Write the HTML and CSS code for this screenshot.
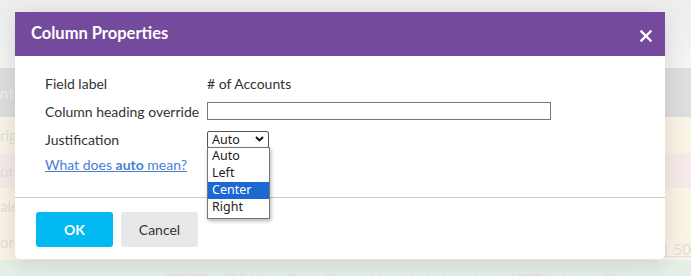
FILE: index.html
```html
<!DOCTYPE html>
<html lang="en">
<head>
  <meta charset="UTF-8" />
  <meta name="viewport" content="width=device-width, initial-scale=1" />
  <title>Column Properties</title>
  <link rel="stylesheet" href="styles.css">
</head>
<body>
  <div class="page" aria-hidden="true">
    <div class="page-top"></div>
    <div class="row row-head"><span>nt I</span></div>
    <div class="row row-cream"><span>rigi</span></div>
    <div class="row row-pink"><span>orr</span></div>
    <div class="row row-cream"><span>ale</span></div>
    <div class="row row-cream"><span>orr</span><a class="row-link">1 50</a></div>
    <div class="row row-green"><span class="addr">27579 - 525 West 26th Street, New York, New York 10001 United States</span></div>
  </div>

  <div class="dialog" role="dialog" aria-labelledby="dlg-title">
    <div class="dialog-header">
      <h2 id="dlg-title">Column Properties</h2>
      <button class="close" aria-label="Close">
        <svg width="12" height="12" viewBox="0 0 12 12"><path d="M1.5 1.5 L10.5 10.5 M10.5 1.5 L1.5 10.5" stroke="#fff" stroke-width="2.4" stroke-linecap="square"/></svg>
      </button>
    </div>

    <div class="dialog-body">
      <div class="field">
        <div class="label">Field label</div>
        <div class="value"># of Accounts</div>
      </div>
      <div class="field">
        <div class="label">Column heading override</div>
        <div class="value"><input type="text" class="text-input"></div>
      </div>
      <div class="field">
        <div class="label">Justification</div>
        <div class="value">
          <div class="select-wrap">
            <div class="select">Auto
              <svg class="chev" width="9" height="6" viewBox="0 0 9 6"><path d="M1 1 L4.5 4.5 L8 1" fill="none" stroke="#111" stroke-width="1.9"/></svg>
            </div>
            <ul class="options">
              <li>Auto</li>
              <li>Left</li>
              <li class="selected">Center</li>
              <li>Right</li>
            </ul>
          </div>
        </div>
      </div>
      <a href="#" class="help-link">What does <b>auto</b> mean?</a>
    </div>

    <div class="dialog-footer">
      <button class="btn btn-primary">OK</button>
      <button class="btn btn-secondary">Cancel</button>
    </div>
  </div>
</body>
</html>
```

FILE: styles.css
```css
body, html {
  margin: 0;
  padding: 0;
  height: 100%;
  overflow: hidden;
  font-family: Lato, 'Noto Sans', sans-serif;
  color: #333;
}

/* faded page behind the modal */
.page {
  height: 100%;
  background: #f2f2f2;
  color: #e2e0da;
  font-size: 15px;
}

.page-top {
  height: 68px;
  background: linear-gradient(to bottom, #eeeeee, #f4f4f4);
}

.row {
  display: flex;
  align-items: center;
  justify-content: space-between;
  height: 36px;
  white-space: nowrap;
  overflow: hidden;
}

.row-head {
  height: 49px;
  background: #dedede;
  color: #ececec;
  font-weight: bold;
}

.row-cream { background: #faf4e6; }
.row-pink { background: #f6ebe8; height: 35px; }
.row-green {
  height: 20px;
  background: #e4efe6;
  align-items: flex-end;
}

.row-link {
  text-decoration: underline;
  padding-top: 14px;
}

.addr {
  padding-left: 164px;
  margin-bottom: -8px;
}

/* modal */
.dialog {
  position: absolute;
  top: 12px;
  left: 15px;
  width: 650px;
  background: #fff;
  border-radius: 0 0 5px 5px;
  box-shadow: 0 4px 24px rgba(0, 0, 0, 0.12);
}

.dialog-header {
  display: flex;
  align-items: center;
  justify-content: space-between;
  height: 44px;
  padding: 0 13px 0 16px;
  background: #744a9d;
}

.dialog-header h2 {
  margin: 0;
  color: #fff;
  font-size: 16.5px;
  font-weight: 700;
  padding-bottom: 2px;
}

.close {
  display: flex;
  border: 0;
  padding: 0;
  background: none;
  margin-top: 3px;
}

.dialog-body {
  padding: 13px 30px 21px;
  font-size: 14px;
}

.field {
  display: grid;
  grid-template-columns: 162px 1fr;
  align-items: center;
  height: 28px;
}

.text-input {
  display: block;
  box-sizing: border-box;
  width: 344px;
  height: 18px;
  margin: 0;
  border: 1px solid #767676;
  padding: 0 3px;
}

.select-wrap {
  position: relative;
  width: 62px;
}

.select {
  display: flex;
  align-items: center;
  justify-content: space-between;
  box-sizing: border-box;
  height: 17px;
  padding: 0 4px;
  border: 1px solid #555;
  border-radius: 2px;
  font-family: 'Noto Sans', 'Open Sans', sans-serif;
  font-size: 12.5px;
  color: #222;
}

.options {
  position: absolute;
  top: 16px;
  left: 0;
  width: 63px;
  margin: 0;
  padding: 0 0 2px;
  list-style: none;
  background: #fff;
  border: 1px solid #767676;
  box-sizing: border-box;
  box-shadow: 1px 2px 4px rgba(0, 0, 0, 0.3);
  font-family: 'Noto Sans', 'Open Sans', sans-serif;
  font-size: 12.5px;
  color: #222;
  z-index: 5;
}

.options li {
  height: 17px;
  line-height: 16px;
  padding-left: 4px;
}

.options li.selected {
  background: #1b68d3;
  color: #fff;
}

.help-link {
  display: block;
  height: 23px;
  line-height: 23px;
  color: #4a7ed6;
  text-decoration: underline;
}

.dialog-footer {
  display: flex;
  gap: 8px;
  padding: 14px 21px 12px;
  border-top: 1px solid #cccccc;
}

.btn {
  width: 77px;
  height: 35px;
  border: 0;
  border-radius: 3px;
  font-family: Lato, 'Noto Sans', sans-serif;
  font-size: 14px;
}

.btn-primary {
  background: #00b9f0;
  color: #fff;
  font-weight: 700;
}

.btn-secondary {
  background: #e8e8e8;
  color: #333;
}
```
